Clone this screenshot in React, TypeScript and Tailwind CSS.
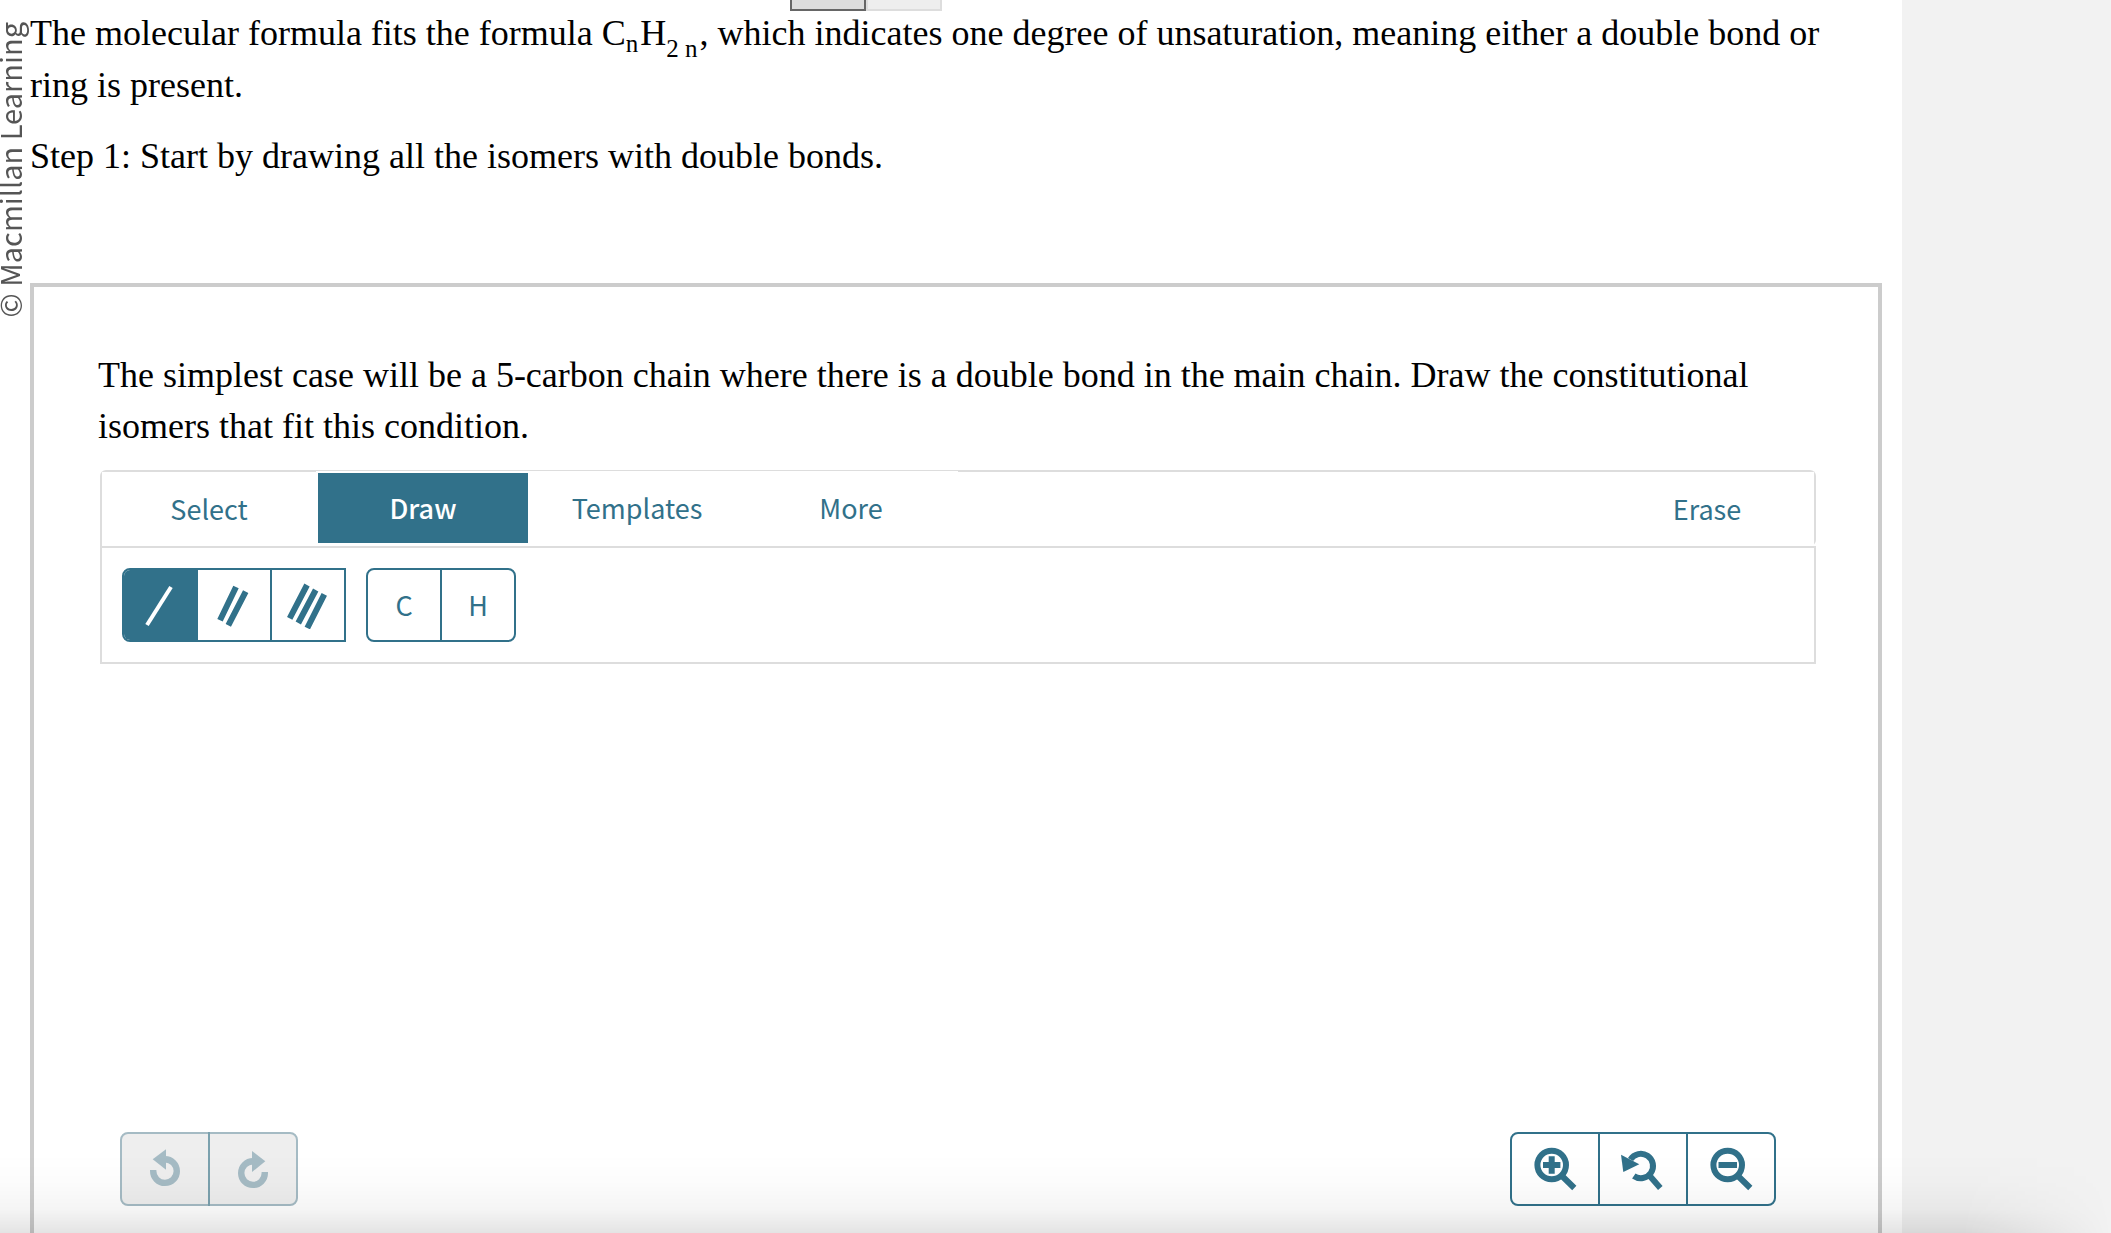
import type { ReactNode } from "react";

function Icon({ children }: { children: ReactNode }) {
  return (
    <svg viewBox="0 0 48 48" className="size-12" fill="none" stroke="currentColor" strokeWidth="6" aria-hidden="true">
      {children}
    </svg>
  );
}

function Tab({ label, active = false }: { label: string; active?: boolean }) {
  return (
    <button
      type="button"
      aria-pressed={active}
      className={
        active
          ? "h-[74px] w-[214px] border-2 border-white bg-[#31718a] bg-clip-padding font-medium text-white"
          : "h-[74px] w-[214px] bg-white text-[#31718a]"
      }
    >
      {label}
    </button>
  );
}

function Tool({ label, className, children }: { label: string; className: string; children: ReactNode }) {
  return (
    <button type="button" aria-label={label} className={`flex items-center justify-center ${className}`}>
      {children}
    </button>
  );
}

export default function App() {
  return (
    <div className="relative flex h-screen overflow-hidden bg-white text-black">
      <div className="flex w-[30px] shrink-0 justify-end">
        <span className="mt-[22px] mr-1 h-fit rotate-180 whitespace-nowrap font-['Noto_Sans_CJK_SC',sans-serif] text-[29px] leading-[34px] text-[#555] [text-orientation:sideways] [writing-mode:vertical-rl]">
          © Macmillan Learning
        </span>
      </div>

      <main className="min-w-0 flex-1 pr-5 font-['Liberation_Serif',serif] text-[36px] leading-[52px]">
        <div className="h-[283px] pt-[7px]">
          <p className="mb-[19px]">
            The molecular formula fits the formula C
            <sub className="relative bottom-[-7px] align-baseline text-[25px] leading-none">n</sub>
            <span className="ml-[2px]">H</span>
            <sub className="relative bottom-[-12px] mr-[2px] align-baseline text-[25px] leading-none">2 n</sub>
            , which indicates one degree of unsaturation, meaning either a double bond or ring is present.
          </p>
          <p>Step 1: Start by drawing all the isomers with double bonds.</p>
        </div>

        <section className="border-4 border-[#ccc] px-16 pt-[63px] pb-16">
          <p className="leading-[51px]">
            The simplest case will be a 5-carbon chain where there is a double bond in the main chain. Draw the
            constitutional isomers that fit this condition.
          </p>

          <div className="mt-[18px] ml-[2px] mr-[-2px] font-['Noto_Sans_CJK_SC',sans-serif] text-[27px] leading-10">
            <div className="flex h-[76px] rounded-t-md rounded-br-md border-2 border-b-0 border-[#ddd]">
              <Tab label="Select" />
              <div className="-mt-px flex">
                <Tab label="Draw" active />
                <Tab label="Templates" />
                <Tab label="More" />
              </div>
              <div className="ml-auto">
                <Tab label="Erase" />
              </div>
            </div>
            <div className="flex gap-5 border-2 border-[#ddd] p-5 text-[#31718a]">
              <div className="flex h-[74px] overflow-hidden rounded-l-lg border-2 border-[#31718a] bg-white">
                <Tool label="Single bond" className="w-[74px] bg-[#31718a] text-white">
                  <Icon>
                    <path d="M10 44L34 6" strokeWidth="4" />
                  </Icon>
                </Tool>
                <Tool label="Double bond" className="w-[74px] border-r-2 border-[#31718a]">
                  <Icon>
                    <path d="M10 39.3L26 6M18.3 44.3L35.7 10.7" />
                  </Icon>
                </Tool>
                <Tool label="Triple bond" className="w-[72px]">
                  <Icon>
                    <path d="M5.7 37.3L23 4M14.3 42L31.7 9M23.3 47L40.3 13.3" />
                  </Icon>
                </Tool>
              </div>
              <div className="flex h-[74px] rounded-lg border-2 border-[#31718a]">
                <Tool label="C" className="w-[74px] border-r-2 border-[#31718a]">C</Tool>
                <Tool label="H" className="w-[72px]">H</Tool>
              </div>
            </div>

            <div className="flex h-[542px] items-end justify-between pr-10 pl-5">
              <div className="flex h-[74px] rounded-lg border-2 border-[#a5bbc4] bg-[#eee] text-[#a5bbc4]">
                <Tool label="Undo" className="w-[86px]">
                  <Icon>
                    <path d="M12.2 25V26A11.8 11.8 0 1 0 24 14.3" strokeWidth="6.4" />
                    <path d="M25 4.3L11.7 14.3L25 24.7Z" fill="currentColor" stroke="none" />
                  </Icon>
                </Tool>
                <Tool label="Redo" className="-my-[2px] w-[88px] border-l-2 border-[#7ba1ae]">
                  <Icon>
                    <path d="M35.8 27V28A11.8 11.8 0 1 1 24 16.3" strokeWidth="6.4" />
                    <path d="M23 6L36.3 16.3L23 27Z" fill="currentColor" stroke="none" />
                  </Icon>
                </Tool>
              </div>
              <div className="flex h-[74px] rounded-lg border-2 border-[#31718a] bg-white text-[#31718a]">
                <Tool label="Zoom in" className="w-[86px]">
                  <Icon>
                    <circle cx="20.7" cy="20" r="14.3" />
                    <path d="M30 30L43.3 43M12 20H29.4M20.7 11.3V28.7" />
                  </Icon>
                </Tool>
                <Tool label="Reset zoom" className="w-[88px] border-l-2 border-[#31718a]">
                  <Icon>
                    <path d="M14.8 31A12.2 12.2 0 1 0 11.5 14.5" />
                    <path d="M30 30L41.3 43" />
                    <path d="M2 9.7L20.3 19.3L4.3 27Z" fill="currentColor" stroke="none" />
                  </Icon>
                </Tool>
                <Tool label="Zoom out" className="w-[88px] border-l-2 border-[#31718a]">
                  <Icon>
                    <circle cx="20.7" cy="20" r="14.3" />
                    <path d="M30 30L43.3 43M11.5 20H30" />
                  </Icon>
                </Tool>
              </div>
            </div>
          </div>
        </section>
      </main>

      <aside className="w-[209px] shrink-0 bg-[#f2f2f2]" />

      <div className="absolute top-0 left-[790px] flex h-[11px]" aria-hidden="true">
        <div className="w-[76px] border-2 border-t-0 border-[#666] bg-[#ddd]" />
        <div className="w-[76px] border-2 border-t-0 border-[#ddd] bg-[#eee]" />
      </div>
      <div className="pointer-events-none absolute inset-x-0 bottom-0 h-20 bg-[linear-gradient(to_bottom,transparent,rgb(0_0_0/0.01)_35%,rgb(0_0_0/0.04)_70%,rgb(0_0_0/0.105))] [mask-image:linear-gradient(to_right,black_93%,transparent)]" />
    </div>
  );
}
